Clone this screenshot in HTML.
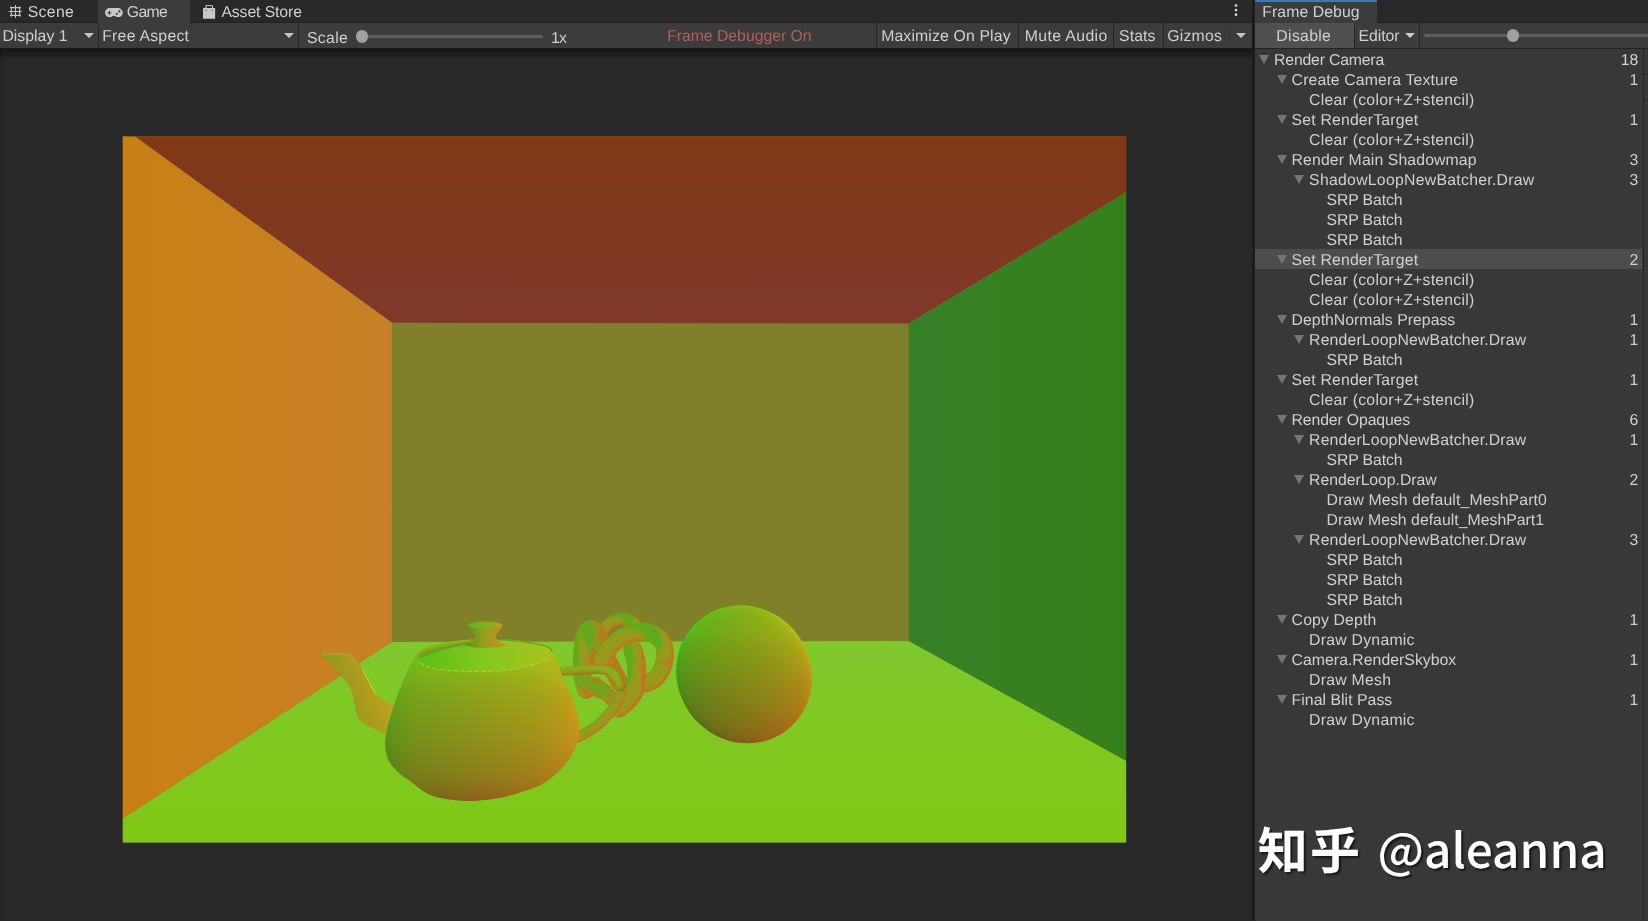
<!DOCTYPE html>
<html lang="en">
<head>
<meta charset="utf-8">
<title>Unity - Frame Debug</title>
<style>
*{box-sizing:border-box;margin:0;padding:0}
html,body{width:1648px;height:921px;overflow:hidden;background:#282828}
body{position:relative;font-family:"Liberation Sans",sans-serif;font-size:15.8px;color:#d0d0d0;line-height:20px}
.abs{position:absolute}
.lbl{position:absolute;white-space:pre;line-height:20px}
#tabs{position:absolute;left:0;top:0;width:1252px;height:23px;background:#282828}
#tabs2{position:absolute;left:1254px;top:0;width:394px;height:23px;background:#282828}
.tab{position:absolute;top:0;height:23px;background:#3c3c3c}
#tb{position:absolute;left:0;top:23px;width:1252px;height:25px;background:#3c3c3c}
#tb2{position:absolute;left:1254px;top:23px;width:394px;height:25px;background:#3c3c3c}
.sep{position:absolute;top:23px;width:1px;height:25px;background:#242424}
#gv{position:absolute;left:0;top:48px;width:1252px;height:873px;background:#282828}
#split{position:absolute;left:1252px;top:0;width:2.8px;height:921px;background:#1b1b1b;z-index:5}
#fd{position:absolute;left:1254px;top:49px;width:394px;height:872px;background:#383838}
.row{position:absolute;left:1254px;width:388px;height:20px}
.row.sel{background:#4d4d4d}
.row .t{position:absolute;top:2.05px;white-space:pre;line-height:20px}
.row .n{position:absolute;right:3.6px;top:2.05px;line-height:20px}
.tri{position:absolute;top:6px;width:0;height:0;border-left:5.7px solid transparent;border-right:5.7px solid transparent;border-top:9.8px solid #757575}
.dd{position:absolute;width:0;height:0;border-left:5px solid transparent;border-right:5px solid transparent;border-top:5.8px solid #c8c8c8}
#app{position:absolute;left:0;top:0;width:1648px;height:921px;will-change:transform;text-rendering:geometricPrecision}
.wm{position:absolute;font-family:"Noto Sans CJK SC","Liberation Sans",sans-serif;color:#fff;font-size:48px;line-height:70px;white-space:pre;text-shadow:2px 2px 2px rgba(0,0,0,.6)}
</style>
</head>
<body>
<div id="app">
<div id="gv"></div>
<div class="abs" style="left:0;top:48px;width:1252px;height:13px;background:linear-gradient(#1c1c1c 0,#161616 12%,#1b1b1b 35%,#222 65%,#282828 100%)"></div>
<div class="abs" style="left:0;top:48px;width:5px;height:873px;background:linear-gradient(90deg,rgba(0,0,0,.18),rgba(0,0,0,0))"></div>
<div id="tabs">
  <div class="abs" style="left:0;top:19px;width:1252px;height:4px;background:linear-gradient(#2a2a2a,#262626 70%,#222)"></div>
  <div class="tab" style="left:98px;width:92px"></div>
  <svg class="abs" style="left:8px;top:4px" width="15" height="15" viewBox="8 4 15 15"><path d="M15.5 4.9V18M11.3 6.5V16.7M19.6 6.5V16.7M8.7 11.5H22M10 7.6H20.9M10 15.4H20.9" stroke="#c4c4c4" stroke-width="1.1" fill="none"/></svg>
  <span class="lbl" style="left:27.66px;top:3.1px;letter-spacing:0.341px">Scene</span>
  <svg class="abs" style="left:105.1px;top:7.8px" width="17.8" height="9.4" viewBox="0 0 17.8 9.4"><path d="M4.7 0H13.1A4.7 4.7 0 0 1 13.1 9.4C11.6 9.4 10.9 8.5 10.3 8H7.5C6.9 8.5 6.2 9.4 4.7 9.4A4.7 4.7 0 0 1 4.7 0Z" fill="#c8c8c8"/><path d="M4.4 2.7V6.7M2.4 4.7H6.4" stroke="#3a3a3a" stroke-width="1.1"/><circle cx="11.8" cy="6" r="1.05" fill="#333"/><circle cx="14.4" cy="3.4" r="1.05" fill="#333"/></svg>
  <span class="lbl" style="left:126.8px;top:3.1px;letter-spacing:-0.64px">Game</span>
  <svg class="abs" style="left:202px;top:4px" width="14" height="16" viewBox="202 4 14 16"><path d="M206 9V6.6Q206 5.5 207.1 5.5H211.4Q212.5 5.5 212.5 6.6V9" stroke="#c4c4c4" stroke-width="1.2" fill="none"/><rect x="203" y="7.95" width="12.15" height="10.8" rx=".6" fill="#c8c8c8"/><rect x="205.2" y="10" width="1.5" height=".9" fill="#555"/><rect x="211.2" y="10" width="1.5" height=".9" fill="#555"/></svg>
  <span class="lbl" style="left:221.39px;top:3.1px;letter-spacing:-0.107px">Asset Store</span>
  <svg class="abs" style="left:1233px;top:4px" width="6" height="13" viewBox="0 0 6 13"><circle cx="3" cy="1.5" r="1.35" fill="#d8d8d8"/><circle cx="3" cy="6.1" r="1.35" fill="#d8d8d8"/><circle cx="3" cy="10.7" r="1.35" fill="#d8d8d8"/></svg>
</div>
<div id="tb">
  <span class="lbl" style="left:2.41px;top:4.1px;letter-spacing:0.015px">Display 1</span>
  <i class="dd" style="left:83.5px;top:10px"></i>
  <span class="lbl" style="left:102.22px;top:4.1px;letter-spacing:0.246px">Free Aspect</span>
  <i class="dd" style="left:283.7px;top:10px"></i>
  <span class="lbl" style="left:306.89px;top:6.1px;letter-spacing:0.377px">Scale</span>
  <div class="abs" style="left:358px;top:11.8px;width:185px;height:3.3px;background:#5e5e5e;border-radius:1.5px"></div>
  <div class="abs" style="left:355.8px;top:7.1px;width:12.4px;height:12.6px;border-radius:50%;background:#a0a0a0"></div>
  <span class="lbl" style="left:551.08px;top:6.4px;letter-spacing:-0.839px">1x</span>
  <span class="lbl" style="left:667.15px;top:4.2px;letter-spacing:-0.03px;color:#b65e5e">Frame Debugger On</span>
  <span class="lbl" style="left:881.15px;top:4.2px;letter-spacing:0.144px">Maximize On Play</span>
  <span class="lbl" style="left:1024.7px;top:4.2px;letter-spacing:0.392px">Mute Audio</span>
  <span class="lbl" style="left:1119.08px;top:4.2px;letter-spacing:0.072px">Stats</span>
  <span class="lbl" style="left:1167.15px;top:4.2px;letter-spacing:0.243px">Gizmos</span>
  <i class="dd" style="left:1235.6px;top:10.1px"></i>
</div>
<div class="sep" style="left:98px"></div>
<div class="sep" style="left:298px"></div>
<div class="sep" style="left:876px"></div>
<div class="sep" style="left:1018px"></div>
<div class="sep" style="left:1113px"></div>
<div class="sep" style="left:1163px"></div>
<div class="sep" style="left:1229px;top:27px;height:17px;background:#323232"></div>
<div id="split"></div>
<div id="tabs2">
  <div class="abs" style="left:0;top:19px;width:394px;height:4px;background:linear-gradient(#2a2a2a,#262626 70%,#222)"></div>
  <div class="tab" style="left:0;width:122.6px"></div>
  <div class="abs" style="left:0;top:0;width:122.6px;height:2.2px;background:#3a79bb"></div>
  <span class="lbl" style="left:8.22px;top:2.8px;letter-spacing:0.076px">Frame Debug</span>
</div>
<div id="tb2">
  <div class="abs" style="left:0;top:0;width:100px;height:25px;background:#505050"></div>
  <span class="lbl" style="left:22.34px;top:4.1px;letter-spacing:0.315px">Disable</span>
  <span class="lbl" style="left:104.59px;top:4.1px;letter-spacing:-0.086px">Editor</span>
  <i class="dd" style="left:150.5px;top:10px"></i>
  <div class="abs" style="left:170.4px;top:11px;width:224px;height:3.2px;background:#5e5e5e;border-radius:1.5px 0 0 1.5px"></div>
  <div class="abs" style="left:252.9px;top:6.2px;width:12.4px;height:12.5px;border-radius:50%;background:#a0a0a0"></div>
</div>
<div class="sep" style="left:1354px"></div>
<div class="sep" style="left:1419px"></div>
<div class="abs" style="left:1254px;top:48px;width:394px;height:1px;background:#232323"></div>
<div id="fd"></div>
<div class="abs" style="left:1643px;top:49px;width:1px;height:872px;background:#242424"></div>
<div class="abs" style="left:1644px;top:74px;width:4px;height:1px;background:#2a2a2a"></div>
<div class="abs" style="left:1644px;top:100px;width:4px;height:1px;background:#2a2a2a"></div>
<svg class="abs" style="left:0;top:0" width="1252" height="921" viewBox="0 0 1252 921">
<defs>
  <clipPath id="fr"><rect x="122.8" y="136.6" width="1003.3" height="705.9"/></clipPath>
  <linearGradient id="gc" x1="0" y1="137" x2="0" y2="323" gradientUnits="userSpaceOnUse"><stop offset="0" stop-color="#803815"/><stop offset="1" stop-color="#80382a"/></linearGradient>
  <linearGradient id="gl" x1="123" y1="0" x2="392" y2="0" gradientUnits="userSpaceOnUse"><stop offset="0" stop-color="#c88014"/><stop offset="1" stop-color="#c88028"/></linearGradient>
  <linearGradient id="gr" x1="909" y1="0" x2="1126" y2="0" gradientUnits="userSpaceOnUse"><stop offset="0" stop-color="#388028"/><stop offset="1" stop-color="#36801a"/></linearGradient>
  <linearGradient id="gf" x1="0" y1="642" x2="0" y2="843" gradientUnits="userSpaceOnUse"><stop offset="0" stop-color="#80c82c"/><stop offset="1" stop-color="#80c814"/></linearGradient>
  <linearGradient id="sR" x1="672" y1="674.3" x2="808" y2="674.3" gradientUnits="userSpaceOnUse"><stop offset="0" stop-color="#380018"/><stop offset="1" stop-color="#c80018"/></linearGradient>
  <linearGradient id="sG" x1="744.1" y1="632" x2="744.1" y2="771" gradientUnits="userSpaceOnUse"><stop offset="0" stop-color="#00c800"/><stop offset="1" stop-color="#003800"/></linearGradient>
  <radialGradient id="sN" cx="744.1" cy="674.3" r="70.3" gradientUnits="userSpaceOnUse" gradientTransform="rotate(54 744.1 674.3) translate(744.1 674.3) scale(1 .947) translate(-744.1 -674.3)"><stop offset="0" stop-color="#808018" stop-opacity=".5"/><stop offset=".5" stop-color="#808018" stop-opacity=".464"/><stop offset=".8" stop-color="#808018" stop-opacity=".375"/><stop offset=".9" stop-color="#808018" stop-opacity=".304"/><stop offset=".95" stop-color="#808018" stop-opacity=".238"/><stop offset=".99" stop-color="#808018" stop-opacity=".124"/><stop offset="1" stop-color="#808018" stop-opacity="0"/></radialGradient>
  <linearGradient id="bR" x1="384" y1="0" x2="580" y2="0" gradientUnits="userSpaceOnUse"><stop offset="0" stop-color="#50001a"/><stop offset=".05" stop-color="#64001a"/><stop offset=".15" stop-color="#76001a"/><stop offset=".5" stop-color="#8e001a"/><stop offset=".78" stop-color="#a2001a"/><stop offset=".92" stop-color="#b8001a"/><stop offset="1" stop-color="#cc001a"/></linearGradient>
  <linearGradient id="bG" x1="0" y1="650" x2="0" y2="802" gradientUnits="userSpaceOnUse"><stop offset="0" stop-color="#00c000"/><stop offset=".14" stop-color="#00b400"/><stop offset=".3" stop-color="#00a200"/><stop offset=".6" stop-color="#009000"/><stop offset=".85" stop-color="#007c00"/><stop offset=".95" stop-color="#006a00"/><stop offset="1" stop-color="#005a00"/></linearGradient>
  <linearGradient id="lidg" x1="417" y1="0" x2="553" y2="0" gradientUnits="userSpaceOnUse"><stop offset="0" stop-color="#5cbc1a"/><stop offset=".5" stop-color="#84c81c"/><stop offset="1" stop-color="#a8c41e"/></linearGradient>
  <linearGradient id="kng" x1="468" y1="0" x2="503" y2="0" gradientUnits="userSpaceOnUse"><stop offset="0" stop-color="#5c961e"/><stop offset=".45" stop-color="#94a01e"/><stop offset="1" stop-color="#cc8c1e"/></linearGradient>
  <linearGradient id="knt" x1="468" y1="0" x2="503" y2="0" gradientUnits="userSpaceOnUse"><stop offset="0" stop-color="#62b61e"/><stop offset=".6" stop-color="#84b01e"/><stop offset="1" stop-color="#c4981e"/></linearGradient>
  <linearGradient id="spg" x1="330" y1="700" x2="385" y2="680" gradientUnits="userSpaceOnUse"><stop offset="0" stop-color="#7c9c1e"/><stop offset=".5" stop-color="#a89a1e"/><stop offset="1" stop-color="#c0a41e"/></linearGradient>
  <clipPath id="cBody"><path d="M416.1 655.6C412.8 658.8 412 662.2 409.9 666.2C407.8 670.2 405.7 675.1 403.6 679.9C401.5 684.7 399.3 689.9 397.4 694.9C395.5 699.9 393.9 704.9 392.4 709.9C390.9 714.9 389.4 720 388.2 725C387 730 385.6 735.5 385.2 740C384.8 744.5 385.2 748.2 386 752C386.8 755.8 387.8 759.3 390 762.8C392.2 766.3 395.7 770 399 773C402.3 776 404.5 777.2 410 781C415.5 784.8 422.8 792.3 431.9 795.6C441 798.9 453.8 800.5 464.7 801C475.6 801.5 488.2 799.7 497.4 798.3C506.6 796.9 512.7 794.8 520 792.5C527.3 790.2 535.1 787.8 541.1 784.7C547.1 781.6 551.8 777.6 556 774C560.2 770.4 563.6 766.8 566.6 762.8C569.6 758.8 572 754.1 574 750C576 745.9 577.6 741.9 578.5 738C579.4 734.1 579.8 730.4 579.6 726.4C579.4 722.4 578.4 718.1 577.5 714C576.6 709.9 575.7 706.4 574 702C572.3 697.6 569.4 691.9 567.4 687.4C565.4 682.9 563.5 679 562 675C560.5 671 560.2 667.5 558.6 663.7C557 659.9 555.5 655.5 552.4 652.4C549.3 649.3 546.2 646.9 540 645C533.8 643.1 524.2 641.9 515 641C505.8 640.1 495 639.5 485 639.5C475 639.5 464.2 639.8 455 641C445.8 642.2 436.5 644.6 430 647C423.5 649.4 419.5 652.4 416.1 655.6Z"/></clipPath>
  <clipPath id="cSph"><ellipse cx="744.1" cy="674.3" rx="70.3" ry="66.6" transform="rotate(54 744.1 674.3)"/></clipPath>
  <filter id="bl" x="-20%" y="-20%" width="140%" height="140%"><feGaussianBlur stdDeviation="1.3"/></filter>
  <path id="kA" d="M586 690C585.4 687.7 583.2 681 582.5 676C581.8 671 581.9 665.2 582 660C582.1 654.8 582.5 649.2 583 645C583.5 640.8 584 637.6 585 635C586 632.4 587.4 630.2 589 629.5C590.6 628.8 592.8 629.2 594.5 630.5C596.2 631.8 597.6 634.1 599 637C600.4 639.9 601.5 644.2 603 648C604.5 651.8 606.2 656 608 660C609.8 664 612 668.2 614 672C616 675.8 619 681.2 620 683"/><path id="kB" d="M603 630C604.3 628.8 608 624.3 611 622.5C614 620.7 618.1 619.3 621.3 619C624.5 618.7 627.4 619.3 630 620.5C632.6 621.7 635.8 625.1 637 626"/><path id="kC1" d="M603 659C603.8 657.5 605.4 653.2 608 650C610.6 646.8 615.4 642.1 618.7 639.5C622 636.9 624.8 635.5 628 634.3C631.2 633 634.7 632.3 638.2 632C641.7 631.7 645.6 631.6 649 632.6C652.4 633.6 656.1 635.6 658.6 637.8C661.1 640 662.9 643 664 646C665.1 649 665 654.3 665.2 656"/><path id="kC2" d="M665.2 656C664.9 657.7 664.4 662.8 663.3 666C662.2 669.2 660.6 672.5 658.8 675C657 677.5 654.8 679.5 652.5 681C650.2 682.5 646.2 683.5 645 684"/><path id="kD" d="M633 650C633.5 651.7 635.1 656.4 635.8 660C636.4 663.6 636.8 668 636.9 671.7C637 675.4 636.9 678.7 636.5 682C636.1 685.3 635.4 688.6 634.3 691.3C633.2 694 631.5 696 630 698C628.5 700 627 701.3 625.2 703C623.4 704.7 620 707.2 619 708"/><path id="kE" d="M583 678C583.5 679.2 584.5 683.2 586 685C587.5 686.8 589.8 687.7 592 688.5C594.2 689.3 596.7 689.2 599 690C601.3 690.8 603.8 691.5 606 693C608.2 694.5 611 698 612 699"/><path id="h_top" d="M557 671.6C560.8 671.4 572.8 670.9 580 670.6C587.2 670.3 594.8 669.5 600 669.8C605.2 670.1 608 670.8 611 672.2C614 673.7 616.2 676 618 678.5C619.8 681 620.9 685.6 621.5 687"/><path id="h_low" d="M621.5 687C621.4 688.3 621.9 692 621 695C620.1 698 618.2 701.7 616 705C613.8 708.3 611.2 711.5 608 715C604.8 718.5 600.7 723 597 726C593.3 729 589.2 731.1 586 733C582.8 734.9 579.3 736.8 578 737.5"/>
  <linearGradient id="gA1" x1="592" y1="0" x2="604" y2="0" gradientUnits="userSpaceOnUse"><stop offset="0" stop-color="#989a1e"/><stop offset="1" stop-color="#b0801f"/></linearGradient>
  <linearGradient id="gA2" x1="601" y1="0" x2="612" y2="0" gradientUnits="userSpaceOnUse"><stop offset="0" stop-color="#62aa1e"/><stop offset="1" stop-color="#62aa1e" stop-opacity="0"/></linearGradient>
</defs>
<g clip-path="url(#fr)">
  <rect x="122" y="136" width="1005" height="708" fill="#80802a"/>
  <polygon points="122,136 1127,136 1127,191.8 908.6,323.5 391.9,322.7 135,136.6" fill="url(#gc)"/>
  <polygon points="122,136 135,136.6 391.9,322.7 391.9,642 122,819.2" fill="url(#gl)"/>
  <polygon points="1127,191.8 908.6,323.5 908.6,641.1 1127,761.6" fill="url(#gr)"/>
  <polygon points="122,819.2 391.9,642 908.6,641.1 1127,761.6 1127,844 122,844" fill="url(#gf)"/>
  <g fill="none" stroke-linecap="round" stroke-linejoin="round">
    <mask id="mkB" maskUnits="userSpaceOnUse" x="550" y="600" width="130" height="150"><use href="#kB" stroke="#fff" stroke-width="11.5"/></mask><use href="#kB" stroke="#c27622" stroke-width="11.5"/><g mask="url(#mkB)"><g filter="url(#bl)"><use href="#kB" stroke="#989a1e" stroke-width="11.5" transform="translate(-1.50 -1.50)"/><use href="#kB" stroke="#62aa1e" stroke-width="11.5" transform="translate(-7.59 -7.59)"/></g></g>
    <path d="M587 642L591 634L597 640L604 668L596 674L589 662Z" fill="#b47c20" stroke="none"/>
    <mask id="mkA" maskUnits="userSpaceOnUse" x="550" y="600" width="130" height="150"><use href="#kA" stroke="#fff" stroke-width="17.5"/></mask><use href="#kA" stroke="#c27622" stroke-width="17.5"/><g mask="url(#mkA)"><g filter="url(#bl)"><use href="#kA" stroke="url(#gA1)" stroke-width="17.5" transform="translate(-2.27 -2.27)"/><use href="#kA" stroke="url(#gA2)" stroke-width="17.5" transform="translate(-11.55 -11.55)"/></g></g>
    <path d="M580 677L598 677L612 688L613 700L598 698L584 692Z" fill="#a68822" stroke="none"/>
    <mask id="mkE" maskUnits="userSpaceOnUse" x="550" y="600" width="130" height="150"><use href="#kE" stroke="#fff" stroke-width="14.5"/></mask><use href="#kE" stroke="#b47622" stroke-width="14.5"/><g mask="url(#mkE)"><g filter="url(#bl)"><use href="#kE" stroke="#a08c20" stroke-width="14.5" transform="translate(-2.17 -2.17)"/><use href="#kE" stroke="#74a41e" stroke-width="14.5" transform="translate(-8.70 -8.70)"/></g></g>
    <mask id="mkC2" maskUnits="userSpaceOnUse" x="550" y="600" width="130" height="150"><use href="#kC2" stroke="#fff" stroke-width="17.5"/></mask><use href="#kC2" stroke="#c27622" stroke-width="17.5"/><g mask="url(#mkC2)"><g filter="url(#bl)"><use href="#kC2" stroke="#989a1e" stroke-width="17.5" transform="translate(-2.27 -2.27)"/><use href="#kC2" stroke="#62aa1e" stroke-width="17.5" transform="translate(-11.55 -11.55)"/></g></g>
    <mask id="mkD" maskUnits="userSpaceOnUse" x="550" y="600" width="130" height="150"><use href="#kD" stroke="#fff" stroke-width="19"/></mask><use href="#kD" stroke="#c27622" stroke-width="19"/><g mask="url(#mkD)"><g filter="url(#bl)"><use href="#kD" stroke="#989a1e" stroke-width="19" transform="translate(-2.47 -2.47)"/><use href="#kD" stroke="#62aa1e" stroke-width="19" transform="translate(-12.54 -12.54)"/></g></g>
    <mask id="mkC1" maskUnits="userSpaceOnUse" x="550" y="600" width="130" height="150"><use href="#kC1" stroke="#fff" stroke-width="17.5"/></mask><use href="#kC1" stroke="#c27622" stroke-width="17.5"/><g mask="url(#mkC1)"><g filter="url(#bl)"><use href="#kC1" stroke="#989a1e" stroke-width="17.5" transform="translate(-2.27 -2.27)"/><use href="#kC1" stroke="#62aa1e" stroke-width="17.5" transform="translate(-11.55 -11.55)"/></g></g>
    <mask id="mh_low" maskUnits="userSpaceOnUse" x="550" y="600" width="130" height="150"><use href="#h_low" stroke="#fff" stroke-width="10.5"/></mask><use href="#h_low" stroke="#c27622" stroke-width="10.5"/><g mask="url(#mh_low)"><g filter="url(#bl)"><use href="#h_low" stroke="#989a1e" stroke-width="10.5" transform="translate(-1.36 -1.36)"/><use href="#h_low" stroke="#62aa1e" stroke-width="10.5" transform="translate(-6.93 -6.93)"/></g></g>
    <mask id="mh_top" maskUnits="userSpaceOnUse" x="550" y="600" width="130" height="150"><use href="#h_top" stroke="#fff" stroke-width="8.6"/></mask><use href="#h_top" stroke="#94781f" stroke-width="8.6"/><g mask="url(#mh_top)"><g filter="url(#bl)"><use href="#h_top" stroke="#9a9a1e" stroke-width="8.6" transform="translate(-1.89 -1.89)"/><use href="#h_top" stroke="#88b01e" stroke-width="8.6" transform="translate(-5.16 -5.16)"/></g></g>
  </g>
  <path d="M320.6 654.3C319.3 655.4 325.6 658.1 328 660.5C330.4 662.9 332.8 666.1 335 668.7C337.2 671.3 339.4 673.5 341.5 676C343.6 678.5 345.9 681.3 347.5 683.7C349.1 686.1 350 688 351 690.5C352 693 352.6 695.4 353.5 699C354.4 702.6 355.1 708.9 356.2 712.4C357.3 715.9 357.7 717.6 360 720C362.3 722.4 366.3 724.9 370 727C373.7 729.1 378.9 731.1 382 732.5C385.1 733.9 386.8 737.2 388.5 735.5C390.2 733.8 390.9 726.8 392 722C393.1 717.2 395.8 710.3 395 707C394.2 703.7 390.5 704.4 387.4 702.4C384.3 700.4 378.8 697.3 376.2 694.9C373.6 692.5 373.2 690.3 372 688C370.8 685.7 370 683.9 368.7 681.2C367.4 678.5 365.5 674.7 364 672C362.5 669.3 361.3 667.1 359.9 664.9C358.5 662.7 356.9 660.6 355.5 659C354.1 657.4 354.4 656.1 351.2 655.2C347.9 654.3 341.1 653.8 336 653.6C330.9 653.5 321.9 653.1 320.6 654.3Z" fill="url(#spg)"/>
  <g clip-path="url(#cBody)" style="isolation:isolate">
    <rect x="380" y="636" width="204" height="170" fill="url(#bR)"/>
    <rect x="380" y="636" width="204" height="170" fill="url(#bG)" style="mix-blend-mode:screen"/>
  </g>
  <path d="M417 656.5C417.8 654.6 420.2 651.6 424 649.5C427.8 647.4 433.7 645.5 440 644C446.3 642.5 454.5 641.3 462 640.5C469.5 639.7 476.7 639.4 485 639.3C493.3 639.2 503.7 639.4 512 640C520.3 640.6 529.1 641.9 535 643C540.9 644.1 544.5 645.2 547.4 646.8C550.3 648.4 552.3 650.4 552.4 652.4C552.5 654.4 550.9 657 548 659C545.1 661 540.5 662.9 535 664.5C529.5 666.1 522.5 667.7 515 668.8C507.5 669.9 498.3 670.9 490 671.3C481.7 671.7 473 671.5 465 671.2C457 670.9 448.5 670.3 442 669.3C435.5 668.3 429.8 666.4 426 665C422.2 663.6 421 662.4 419.5 661C418 659.6 416.2 658.4 417 656.5Z" fill="url(#lidg)"/>
  <path d="M418.5 658C424 651 440 645.5 462 642.2 470 641 474 640.8 478 640.8L478 644C462 645 440 649 426 656Z" fill="#58ac1c"/>
  <path d="M417.4 655.3C428 649.5 452 643.5 474 640.5" fill="none" stroke="#c4841e" stroke-width="1.5"/>
  <path d="M419.9 662.4C424 666 430 668 436 669C450 671 470 671.6 490 671.3 512 670.8 535 666 548 659.5" fill="none" stroke="#b2d42c" stroke-width="1" stroke-dasharray="5 2"/>
  <path d="M497 639.5C515 640.5 538 643.5 547.4 646.8 550 648.5 552 650.5 552.4 652.4" fill="none" stroke="#6a9a1e" stroke-width="1.2"/>
  <path d="M468.7 624.6C469.6 623.5 473.2 622.7 476 622.2C478.8 621.7 482.3 621.6 485.5 621.6C488.7 621.6 492.2 621.7 495 622.2C497.8 622.7 501.5 623.5 502.4 624.6C503.3 625.7 501.4 627.5 500.5 629C499.6 630.5 497.8 632 497 633.5C496.2 635 495.7 636.6 496 638C496.3 639.4 497.5 640.8 499 642C500.5 643.2 507.2 644.5 505 645.5C502.8 646.5 492 648 485.5 648C479 648 468.2 646.5 466 645.5C463.8 644.5 470.5 643.2 472 642C473.5 640.8 474.7 639.4 475 638C475.3 636.6 474.8 635 474 633.5C473.2 632 471.4 630.5 470.5 629C469.6 627.5 467.8 625.7 468.7 624.6Z" fill="url(#kng)"/>
  <ellipse cx="485.3" cy="625" rx="17.2" ry="3.1" fill="url(#knt)"/>
  <path d="M363 670.5C366 676 371 686 375.5 693.5" fill="none" stroke="#c6cc22" stroke-width="1.3" stroke-linecap="round"/>
  <path d="M323 654.7C332 653.6 343 653.7 350.5 655.2" fill="none" stroke="#9cb41e" stroke-width="1.2"/>
  <g clip-path="url(#cSph)" style="isolation:isolate">
    <rect x="670" y="600" width="148" height="150" fill="url(#sR)"/>
    <rect x="670" y="600" width="148" height="150" fill="url(#sG)" style="mix-blend-mode:screen"/>
    <rect x="670" y="600" width="148" height="150" fill="url(#sN)"/>
  </g>
</g>
</svg>
<div class="row" style="top:49px"><i class="tri" style="left:5.3px"></i><span class="t" style="left:20.1px;letter-spacing:-0.193px">Render Camera</span><span class="n">18</span></div>
<div class="row" style="top:69px"><i class="tri" style="left:22.8px"></i><span class="t" style="left:37.6px;letter-spacing:0.129px">Create Camera Texture</span><span class="n">1</span></div>
<div class="row" style="top:89px"><span class="t" style="left:55.1px;letter-spacing:0.245px">Clear (color+Z+stencil)</span></div>
<div class="row" style="top:109px"><i class="tri" style="left:22.8px"></i><span class="t" style="left:37.6px;letter-spacing:0.177px">Set RenderTarget</span><span class="n">1</span></div>
<div class="row" style="top:129px"><span class="t" style="left:55.1px;letter-spacing:0.245px">Clear (color+Z+stencil)</span></div>
<div class="row" style="top:149px"><i class="tri" style="left:22.8px"></i><span class="t" style="left:37.6px;letter-spacing:0.116px">Render Main Shadowmap</span><span class="n">3</span></div>
<div class="row" style="top:169px"><i class="tri" style="left:40.3px"></i><span class="t" style="left:55.1px;letter-spacing:0.271px">ShadowLoopNewBatcher.Draw</span><span class="n">3</span></div>
<div class="row" style="top:189px"><span class="t" style="left:72.6px;letter-spacing:-0.139px">SRP Batch</span></div>
<div class="row" style="top:209px"><span class="t" style="left:72.6px;letter-spacing:-0.139px">SRP Batch</span></div>
<div class="row" style="top:229px"><span class="t" style="left:72.6px;letter-spacing:-0.139px">SRP Batch</span></div>
<div class="row sel" style="top:249px"><i class="tri" style="left:22.8px"></i><span class="t" style="left:37.6px;letter-spacing:0.177px">Set RenderTarget</span><span class="n">2</span></div>
<div class="row" style="top:269px"><span class="t" style="left:55.1px;letter-spacing:0.245px">Clear (color+Z+stencil)</span></div>
<div class="row" style="top:289px"><span class="t" style="left:55.1px;letter-spacing:0.245px">Clear (color+Z+stencil)</span></div>
<div class="row" style="top:309px"><i class="tri" style="left:22.8px"></i><span class="t" style="left:37.6px;letter-spacing:0.019px">DepthNormals Prepass</span><span class="n">1</span></div>
<div class="row" style="top:329px"><i class="tri" style="left:40.3px"></i><span class="t" style="left:55.1px;letter-spacing:0.149px">RenderLoopNewBatcher.Draw</span><span class="n">1</span></div>
<div class="row" style="top:349px"><span class="t" style="left:72.6px;letter-spacing:-0.139px">SRP Batch</span></div>
<div class="row" style="top:369px"><i class="tri" style="left:22.8px"></i><span class="t" style="left:37.6px;letter-spacing:0.177px">Set RenderTarget</span><span class="n">1</span></div>
<div class="row" style="top:389px"><span class="t" style="left:55.1px;letter-spacing:0.245px">Clear (color+Z+stencil)</span></div>
<div class="row" style="top:409px"><i class="tri" style="left:22.8px"></i><span class="t" style="left:37.6px;letter-spacing:-0.134px">Render Opaques</span><span class="n">6</span></div>
<div class="row" style="top:429px"><i class="tri" style="left:40.3px"></i><span class="t" style="left:55.1px;letter-spacing:0.149px">RenderLoopNewBatcher.Draw</span><span class="n">1</span></div>
<div class="row" style="top:449px"><span class="t" style="left:72.6px;letter-spacing:-0.139px">SRP Batch</span></div>
<div class="row" style="top:469px"><i class="tri" style="left:40.3px"></i><span class="t" style="left:55.1px;letter-spacing:-0.046px">RenderLoop.Draw</span><span class="n">2</span></div>
<div class="row" style="top:489px"><span class="t" style="left:72.6px;letter-spacing:0.13px">Draw Mesh default_MeshPart0</span></div>
<div class="row" style="top:509px"><span class="t" style="left:72.6px;letter-spacing:0.022px">Draw Mesh default_MeshPart1</span></div>
<div class="row" style="top:529px"><i class="tri" style="left:40.3px"></i><span class="t" style="left:55.1px;letter-spacing:0.149px">RenderLoopNewBatcher.Draw</span><span class="n">3</span></div>
<div class="row" style="top:549px"><span class="t" style="left:72.6px;letter-spacing:-0.139px">SRP Batch</span></div>
<div class="row" style="top:569px"><span class="t" style="left:72.6px;letter-spacing:-0.139px">SRP Batch</span></div>
<div class="row" style="top:589px"><span class="t" style="left:72.6px;letter-spacing:-0.139px">SRP Batch</span></div>
<div class="row" style="top:609px"><i class="tri" style="left:22.8px"></i><span class="t" style="left:37.6px;letter-spacing:0.14px">Copy Depth</span><span class="n">1</span></div>
<div class="row" style="top:629px"><span class="t" style="left:55.1px;letter-spacing:0.244px">Draw Dynamic</span></div>
<div class="row" style="top:649px"><i class="tri" style="left:22.8px"></i><span class="t" style="left:37.6px;letter-spacing:0.027px">Camera.RenderSkybox</span><span class="n">1</span></div>
<div class="row" style="top:669px"><span class="t" style="left:55.1px;letter-spacing:0.249px">Draw Mesh</span></div>
<div class="row" style="top:689px"><i class="tri" style="left:22.8px"></i><span class="t" style="left:37.6px;letter-spacing:0.042px">Final Blit Pass</span><span class="n">1</span></div>
<div class="row" style="top:709px"><span class="t" style="left:55.1px;letter-spacing:0.244px">Draw Dynamic</span></div><div class="wm" style="left:1257.8px;top:813.2px;font-weight:700;font-size:50px;letter-spacing:2.2px">知乎</div>
<div class="wm" style="left:1377.6px;top:813.3px;font-size:47.8px;font-weight:500">@aleanna</div>
</div></body></html>
